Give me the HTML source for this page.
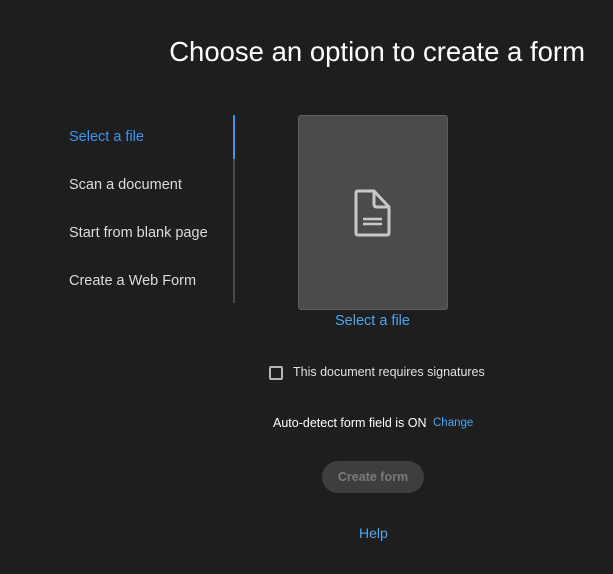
<!DOCTYPE html>
<html><head><style>
body{margin:0;width:613px;height:574px;background:#1e1e1e;font-family:"Liberation Sans",sans-serif;position:relative;overflow:hidden;color:#e6e6e6}
.a{position:absolute;white-space:nowrap}
</style></head><body>
<div class="a" style="right:28px;top:36px;font-size:27.5px;color:#fff;letter-spacing:0px">Choose an option to create a form</div>
<div class="a" style="left:69px;top:129px;font-size:14.5px;color:#3d93f0">Select a file</div>
<div class="a" style="left:69px;top:177px;font-size:14.5px;color:#dcdcdc">Scan a document</div>
<div class="a" style="left:69px;top:225px;font-size:14.5px;color:#dcdcdc">Start from blank page</div>
<div class="a" style="left:69px;top:273px;font-size:14.5px;color:#dcdcdc">Create a Web Form</div>
<div class="a" style="left:233px;top:115px;width:2px;height:188px;background:#4a4a4a"></div>
<div class="a" style="left:233px;top:115px;width:2px;height:44px;background:#3d93f0"></div>
<div class="a" style="left:298px;top:115px;width:148px;height:193px;background:#4b4b4b;border:1px solid #5e5e5e;border-radius:3px"></div>
<svg class="a" style="left:354px;top:189px" width="38" height="48" viewBox="0 0 38 48">
<path d="M4 2 H20 L35 18 V44 Q35 46 33 46 H4 Q2 46 2 44 V4 Q2 2 4 2 Z" fill="none" stroke="#c8c8c8" stroke-width="3"/>
<path d="M20 2 V15 Q20 18 23 18 H35" fill="none" stroke="#c8c8c8" stroke-width="3"/>
<path d="M9 30 H28 M9 35 H28" stroke="#c8c8c8" stroke-width="2.5"/>
</svg>
<div class="a" style="left:335px;top:313px;font-size:14.5px;color:#4aa6f0">Select a file</div>
<div class="a" style="left:269px;top:366px;width:10px;height:10px;border:2px solid #b4b4b4;border-radius:2px"></div>
<div class="a" style="left:293px;top:365px;font-size:12.5px;color:#e0e0e0">This document requires signatures</div>
<div class="a" style="left:273px;top:416px;font-size:12.5px;color:#fff">Auto-detect form field is ON</div>
<div class="a" style="left:433px;top:417px;font-size:11.5px;color:#4aa6f0">Change</div>
<div class="a" style="left:322px;top:461px;width:102px;height:32px;border-radius:16px;background:#3e3e3e;color:#7a7a7a;font-size:12.5px;font-weight:bold;text-align:center;line-height:32px">Create form</div>
<div class="a" style="left:359px;top:525px;font-size:14px;color:#4aa6f0">Help</div>
</body></html>
